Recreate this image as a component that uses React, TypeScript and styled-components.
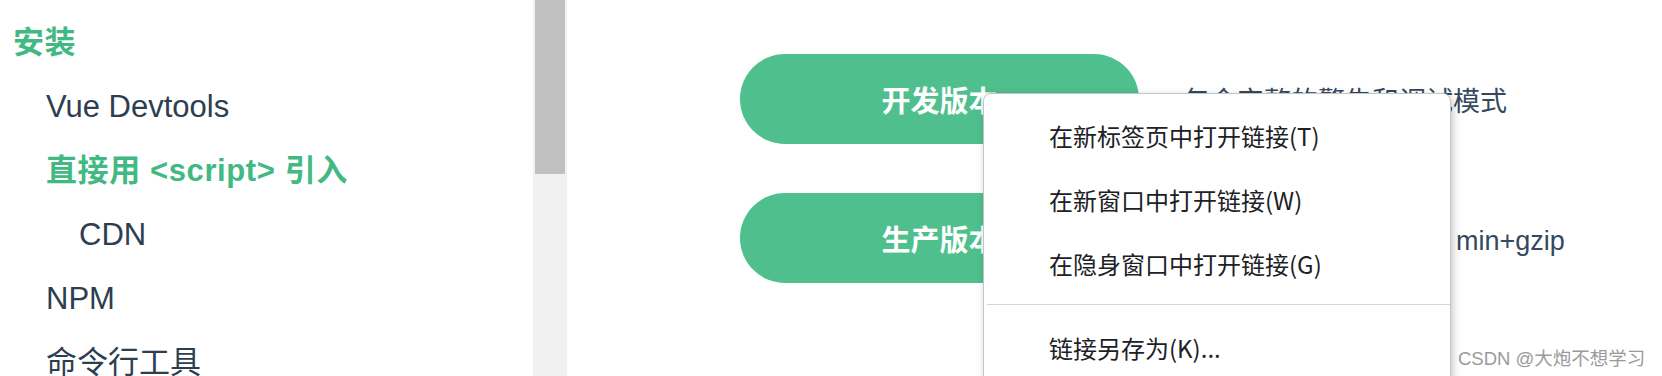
import React from "react"
import styled, { createGlobalStyle } from "styled-components"

const GlobalStyle = createGlobalStyle`
  html, body {
    margin: 0;
    padding: 0;
    background: #fff;
    overflow: hidden;
  }
  body {
    font-family: "Liberation Sans", "Noto Sans CJK SC", sans-serif;
  }
`

interface navItem {
  label: string,
  level: number,
  active?: boolean
}

const navItems: navItem[] = [
  { label: "安装", level: 0, active: true },
  { label: "Vue Devtools", level: 1 },
  { label: "直接用 <script> 引入", level: 1, active: true },
  { label: "CDN", level: 2 },
  { label: "NPM", level: 1 },
  { label: "命令行工具", level: 1 },
]

const downloads = [
  { name: "开发版本", note: "包含完整的警告和调试模式" },
  { name: "生产版本", note: "删除了警告，33.30KB min+gzip" },
]

const menuItems = [
  ["在新标签页中打开链接(T)", "在新窗口中打开链接(W)", "在隐身窗口中打开链接(G)"],
  ["链接另存为(K)..."],
]

export default function App(){
  return(
    <Page>
      <GlobalStyle />
      <Sidebar>
        <NavList>
          {
            navItems.map(item => (
              <NavItem key={item.label} level={item.level} active={item.active}>
                {item.label}
              </NavItem>
            ))
          }
        </NavList>
      </Sidebar>
      <ScrollTrack>
        <ScrollThumb />
      </ScrollTrack>
      <Main>
        {
          downloads.map(d => (
            <DownloadRow key={d.name}>
              <DownloadButton>{d.name}</DownloadButton>
              <Note>{d.note}</Note>
            </DownloadRow>
          ))
        }
      </Main>
      <ContextMenu>
        {
          menuItems.map((group, i) => (
            <React.Fragment key={i}>
              {i > 0 && <MenuSeparator />}
              {group.map(label => <MenuItem key={label}>{label}</MenuItem>)}
            </React.Fragment>
          ))
        }
      </ContextMenu>
      <Watermark>CSDN @大炮不想学习</Watermark>
    </Page>
  )
}

const Page = styled.div`
  position: relative;
  display: flex;
  width: 1662px;
  height: 376px;
  overflow: hidden;
`

const Sidebar = styled.aside`
  width: 533px;
  flex-shrink: 0;
  background: #fff;
`

const NavList = styled.ul`
  list-style: none;
  margin: 0;
  padding: 11px 0 0 0;
`

interface navProps {
  level: number,
  active?: boolean
}
const NavItem = styled.li<navProps>`
  height: 64px;
  line-height: 64px;
  padding-left: ${props => 13 + props.level * 33}px;
  font-size: 31px;
  white-space: nowrap;
  color: ${props => props.active ? "#42b983" : "#2c3e50"};
  font-weight: ${props => props.active ? 700 : 400};
  letter-spacing: ${props => props.active ? "0.6px" : "0"};
`

const ScrollTrack = styled.div`
  width: 34px;
  flex-shrink: 0;
  background: #f1f1f1;
  display: flex;
  justify-content: center;
`

const ScrollThumb = styled.div`
  width: 30px;
  height: 174px;
  background: #c1c1c1;
`

const Main = styled.main`
  flex: 1;
  display: flex;
  flex-direction: column;
  gap: 49px;
  padding: 54px 0 0 173px;
`

const DownloadRow = styled.div`
  display: flex;
  align-items: center;
  gap: 44px;
`

const DownloadButton = styled.a`
  display: flex;
  align-items: center;
  justify-content: center;
  width: 399px;
  height: 90px;
  border-radius: 45px;
  background: #4fc08d;
  color: #fff;
  font-size: 29px;
  font-weight: 700;
  cursor: pointer;
`

const Note = styled.span`
  font-size: 27px;
  color: #34495e;
  white-space: nowrap;
`

const ContextMenu = styled.div`
  position: absolute;
  left: 983px;
  top: 93px;
  width: 468px;
  height: 320px;
  padding-top: 10px;
  box-sizing: border-box;
  background: #fff;
  border: 1px solid #c4c4c4;
  border-radius: 8px;
  box-shadow: 2px 3px 8px rgba(0, 0, 0, 0.22);
  font-family: "Noto Sans CJK SC", "Liberation Sans", sans-serif;
`

const MenuItem = styled.div`
  height: 64px;
  line-height: 64px;
  padding-left: 65px;
  font-size: 24px;
  color: #202124;
  white-space: nowrap;
`

const MenuSeparator = styled.div`
  height: 1px;
  margin: 8px 0 11px 3px;
  background: #d6d6d6;
`

const Watermark = styled.div`
  position: absolute;
  left: 1458px;
  top: 344px;
  font-size: 18.5px;
  color: #9a9a9a;
  white-space: nowrap;
  text-shadow: 0 0 2px #fff, 0 0 2px #fff;
`
